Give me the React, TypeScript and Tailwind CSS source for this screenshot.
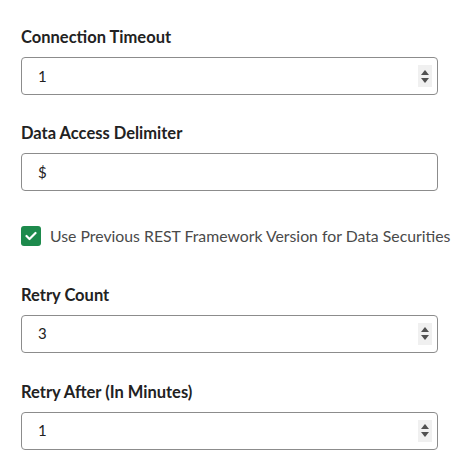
import React from "react";

function Spinner() {
  return (
    <div className="flex h-[22px] w-[14px] flex-col items-center justify-center gap-[3px] bg-[#f0f0f0]">
      <svg width="8" height="5" viewBox="0 0 8 5">
        <path d="M4 0 L8 5 L0 5 Z" fill="#505050" />
      </svg>
      <svg width="8" height="5" viewBox="0 0 8 5">
        <path d="M0 0 L8 0 L4 5 Z" fill="#505050" />
      </svg>
    </div>
  );
}

function Field({ label, value, spin }: { label: string; value: string; spin?: boolean }) {
  return (
    <div className="flex flex-col">
      <label className="text-[16.5px] font-bold leading-[20px] text-[#222]">{label}</label>
      <div className="mt-[10px] flex h-[38px] items-center justify-between rounded-[4px] border border-[#8c8c8c] pl-[16px] pr-[5px]">
        <span className="text-[15px] text-[#222]">{value}</span>
        {spin && <Spinner />}
      </div>
    </div>
  );
}

export default function App() {
  return (
    <div
      className="flex w-[474px] flex-col bg-white pl-[21px] pr-[36px] pt-[27px]"
      style={{ fontFamily: "Lato, 'Liberation Sans', sans-serif" }}
    >
      <Field label="Connection Timeout" value="1" spin />
      <div className="mt-[28px]">
        <Field label="Data Access Delimiter" value="$" />
      </div>
      <div className="mt-[33px] flex items-center gap-[9px]">
        <div className="flex h-[20px] w-[20px] shrink-0 items-center justify-center rounded-[3px] bg-[#1d8a4c]">
          <svg width="12" height="10" viewBox="0 0 12 10">
            <path d="M1.5 5 L4.5 8 L10.5 2" stroke="white" strokeWidth="2.2" fill="none" strokeLinecap="round" strokeLinejoin="round" />
          </svg>
        </div>
        <span className="whitespace-nowrap text-[15.8px] text-[#4a4a4a]">
          Use Previous REST Framework Version for Data Securities
        </span>
      </div>
      <div className="mt-[37px]">
        <Field label="Retry Count" value="3" spin />
      </div>
      <div className="mt-[29px]">
        <Field label="Retry After (In Minutes)" value="1" spin />
      </div>
    </div>
  );
}
